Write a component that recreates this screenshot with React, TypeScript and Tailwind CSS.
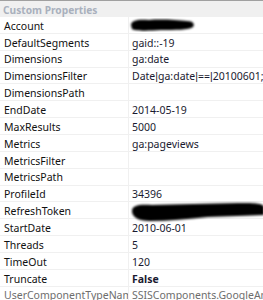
import React from "react";

type Prop = {
  name: string;
  value: string;
  bold?: boolean;
  readOnly?: boolean;
  hidden?: "account" | "token";
};

const props: Prop[] = [
  { name: "Account", value: "", hidden: "account" },
  { name: "DefaultSegments", value: "gaid::-19" },
  { name: "Dimensions", value: "ga:date" },
  { name: "DimensionsFilter", value: "Date|ga:date|==|20100601;" },
  { name: "DimensionsPath", value: "" },
  { name: "EndDate", value: "2014-05-19" },
  { name: "MaxResults", value: "5000" },
  { name: "Metrics", value: "ga:pageviews" },
  { name: "MetricsFilter", value: "" },
  { name: "MetricsPath", value: "" },
  { name: "ProfileId", value: "34396" },
  { name: "RefreshToken", value: "", hidden: "token" },
  { name: "StartDate", value: "2010-06-01" },
  { name: "Threads", value: "5" },
  { name: "TimeOut", value: "120" },
  { name: "Truncate", value: "False", bold: true },
  { name: "UserComponentTypeName", value: "SSISComponents.GoogleAnalyticsSource", readOnly: true },
];

// Noto's pipe is very wide, the grid's font has a thin one
const withPipes = (v: string) =>
  v.split("|").map((part, i) => (
    <React.Fragment key={i}>
      {i > 0 && <span className="font-['Liberation_Sans']">|</span>}
      {part}
    </React.Fragment>
  ));

const Scribble = ({ kind }: { kind: "account" | "token" }) => {
  if (kind === "account") {
    return (
      <svg className="absolute left-[-4px] top-[0px]" width="72" height="16" viewBox="0 0 72 16">
        <defs>
          <filter id="b1">
            <feGaussianBlur stdDeviation="1" />
          </filter>
        </defs>
        <path
          d="M6 8 C6 3 14 2 24 3 C36 2 52 3 62 4 C68 4 70 7 68 10 C64 13 50 13 36 13 C22 14 10 14 7 12 Z"
          fill="#000"
          filter="url(#b1)"
        />
      </svg>
    );
  }
  return (
    <svg className="absolute left-[-1px] top-[-2px]" width="136" height="24" viewBox="0 0 136 24">
      <defs>
        <filter id="b2">
          <feGaussianBlur stdDeviation="1.2" />
        </filter>
      </defs>
      <path
        d="M4 11 C4 5 12 4 24 5 C50 4 80 4 110 3 C124 3 136 3 136 7 L136 15 C120 16 100 16 80 17 C60 19 40 21 22 21 C10 21 4 17 4 11 Z"
        fill="#000"
        filter="url(#b2)"
      />
    </svg>
  );
};

export default function App() {
  return (
    <div
      className="w-[263px] h-[300px] overflow-hidden bg-white text-[10.5px] leading-none"
      style={{ fontFamily: '"Noto Sans", Lato, sans-serif' }}
    >
      <div className="h-[17px] bg-[#f0f0f0] border-t border-[#a0a0a0] flex items-center pl-[3px] pt-[2px] font-bold text-[#a9b0bd] text-[10.2px]">
        Custom Properties
      </div>
      {props.map((p) => (
        <div key={p.name} className="flex h-[16.86px] border-b border-[#f0f0f0]">
          <div
            className={`w-[129px] shrink-0 pl-[4px] pt-[2px] flex items-center overflow-hidden whitespace-nowrap border-r border-[#f0f0f0] ${
              p.readOnly ? "text-[#6d6d6d]" : "text-[#111]"
            }`}
          >
            {p.name}
          </div>
          <div
            className={`relative flex-1 pl-[3px] pt-[2px] flex items-center overflow-visible whitespace-nowrap ${
              p.readOnly ? "text-[#6d6d6d]" : "text-[#1a1a30]"
            } ${p.bold ? "font-bold" : ""}`}
          >
            {withPipes(p.value)}
            {p.hidden && <Scribble kind={p.hidden} />}
          </div>
        </div>
      ))}
    </div>
  );
}
